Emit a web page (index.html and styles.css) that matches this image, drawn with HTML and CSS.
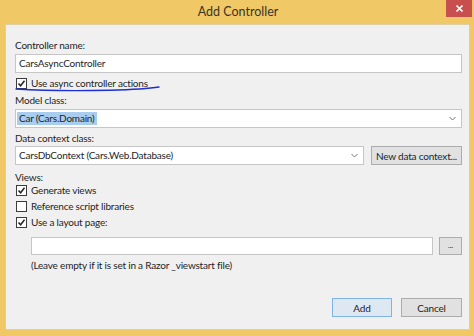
FILE: index.html
```html
<!DOCTYPE html>
<html>
<head>
<meta charset="utf-8">
<link rel="stylesheet" href="styles.css">
</head>
<body>
<div class="window">
  <div class="titlebar">
    <div class="title">Add Controller</div>
    <div class="close"><svg width="9" height="9" viewBox="0 0 9 9"><path d="M1.5 1.5 L7.5 7.5 M7.5 1.5 L1.5 7.5" stroke="#fff" stroke-width="1.7" fill="none"/></svg></div>
  </div>
  <div class="client">
    <div class="label l-name">Controller name:</div>
    <div class="textbox">CarsAsyncController</div>
    <div class="check row-async">
      <span class="box"><svg width="9" height="9" viewBox="0 0 9 9"><path d="M1.5 4.5 L3.6 6.8 L7.5 1.8" stroke="#222" stroke-width="1.5" fill="none"/></svg></span>
      <span>Use async controller actions</span>
    </div>
    <div class="label l-model">Model class:</div>
    <div class="combo"><span class="sel">Car (Cars.Domain)</span><span class="chev"><svg width="7" height="5" viewBox="0 0 7 5"><path d="M0.5 1 L3.5 4 L6.5 1" stroke="#777" stroke-width="1" fill="none"/></svg></span></div>
    <div class="label l-ctx">Data context class:</div>
    <div class="ctxrow">
      <div class="combo grow"><span>CarsDbContext (Cars.Web.Database)</span><span class="chev"><svg width="7" height="5" viewBox="0 0 7 5"><path d="M0.5 1 L3.5 4 L6.5 1" stroke="#777" stroke-width="1" fill="none"/></svg></span></div>
      <div class="button newctx">New data context...</div>
    </div>
    <div class="label l-views">Views:</div>
    <div class="check">
      <span class="box"><svg width="9" height="9" viewBox="0 0 9 9"><path d="M1.5 4.5 L3.6 6.8 L7.5 1.8" stroke="#222" stroke-width="1.5" fill="none"/></svg></span>
      <span>Generate views</span>
    </div>
    <div class="check">
      <span class="box"></span>
      <span>Reference script libraries</span>
    </div>
    <div class="check">
      <span class="box"><svg width="9" height="9" viewBox="0 0 9 9"><path d="M1.5 4.5 L3.6 6.8 L7.5 1.8" stroke="#222" stroke-width="1.5" fill="none"/></svg></span>
      <span>Use a layout page:</span>
    </div>
    <div class="layoutrow">
      <div class="textbox grow"></div>
      <div class="button dots">...</div>
    </div>
    <div class="hint">(Leave empty if it is set in a Razor _viewstart file)</div>
    <div class="actions">
      <div class="button default">Add</div>
      <div class="button cancel">Cancel</div>
    </div>
    <svg class="ink" width="150" height="10" viewBox="0 0 150 10"><path d="M1 5 C 25 6.5, 60 7, 95 6.2 C 120 5.6, 135 4.5, 144 3" stroke="#1d2fd0" stroke-width="1.4" fill="none" stroke-linecap="round"/></svg>
  </div>
</div>
</body>
</html>
```
FILE: styles.css
```css
* { box-sizing: border-box; }
html, body { margin: 0; padding: 0; }
body {
  width: 474px;
  height: 336px;
  overflow: hidden;
  font-family: Lato, "Noto Sans", sans-serif;
  font-size: 10px;
  letter-spacing: -0.2px;
  color: #1e1e1e;
}
.window {
  width: 474px;
  height: 336px;
  background: #f0c865;
  display: flex;
  flex-direction: column;
}
.titlebar {
  height: 24px;
  flex: none;
  position: relative;
  display: flex;
  justify-content: center;
  align-items: center;
}
.title {
  font-size: 12.5px;
  letter-spacing: 0;
  color: #3a3426;
  line-height: 24px;
  padding-left: 2px;
}
.close {
  position: absolute;
  right: 2px;
  top: 0;
  width: 26px;
  height: 17px;
  background: #c7504f;
  display: flex;
  align-items: center;
  justify-content: center;
}
.client {
  position: relative;
  flex: 1;
  margin: 0 4px 6px 5px;
  background: #f0f0f0;
  border: 1px solid #dccfa6;
  padding: 0 7px 0 9px;
  display: flex;
  flex-direction: column;
}
.label { height: 14px; line-height: 14px; white-space: nowrap; }
.l-name { margin-top: 13px; }
.l-model { margin-top: 3px; }
.l-ctx { margin-top: 3px; }
.l-views { margin-top: 7px; height: 10px; line-height: 10px; }
.textbox, .combo {
  height: 19px;
  background: #fff;
  border: 1px solid #c6c6c6;
  line-height: 17px;
  padding: 0 3px;
  margin-top: 2px;
  white-space: nowrap;
}
.combo {
  display: flex;
  justify-content: space-between;
  align-items: center;
}
.chev { display: flex; align-items: center; padding-right: 2px; }
.sel { background: #a9cdef; padding: 0 2px; margin-left: -2px; line-height: 13px; }
.check {
  display: flex;
  align-items: center;
  height: 16px;
  gap: 4px;
  padding-left: 1px;
  white-space: nowrap;
}
.box {
  width: 11px;
  height: 11px;
  border: 1px solid #3c3c3c;
  background: #fff;
  display: flex;
  align-items: center;
  justify-content: center;
}
.row-async { margin-top: 3px; height: 14px; }
.ctxrow, .layoutrow {
  display: flex;
  align-items: center;
}
.ctxrow { margin-top: 1px; gap: 7px; }
.ctxrow .combo { margin-top: 0; }
.grow { flex: 1; }
.button {
  height: 19px;
  background: #e1e1e1;
  border: 1px solid #acacac;
  display: flex;
  align-items: center;
  justify-content: center;
  white-space: nowrap;
}
.newctx { width: 91px; }
.layoutrow { margin-top: 7px; padding-left: 16px; gap: 6px; }
.layoutrow .textbox { margin-top: 0; height: 18px; }
.dots { width: 23px; height: 18px; font-size: 8px; padding-bottom: 2px; }
.hint { padding-left: 16px; margin-top: 3px; height: 14px; line-height: 14px; white-space: nowrap; }
.actions {
  margin-top: 26px;
  display: flex;
  justify-content: flex-end;
  gap: 9px;
}
.actions .button { height: 19px; }
.default { width: 60px; background: #dde8f3; border-color: #80b3e6; }
.cancel { width: 61px; }
.ink {
  position: absolute;
  left: 9px;
  top: 59px;
}
```
